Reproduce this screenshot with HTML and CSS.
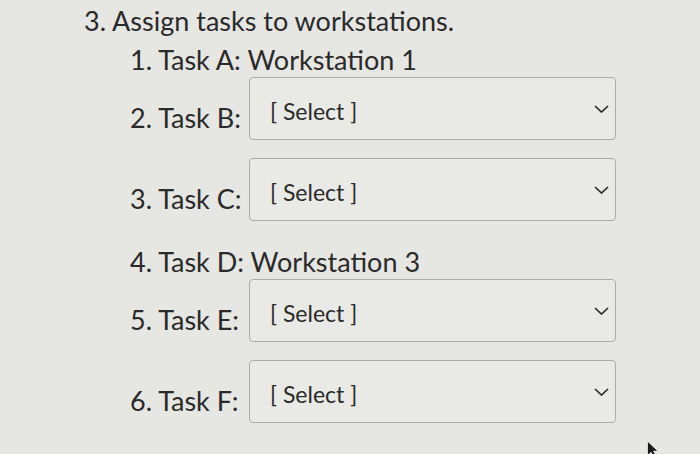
FILE: index.html
```html
<!DOCTYPE html>
<html>
<head>
<meta charset="utf-8">
<link rel="stylesheet" href="styles.css">
</head>
<body>
<div class="page">
  <div class="heading">3. Assign tasks to workstations.</div>
  <div class="list">
    <div class="item plain plain-first">1. Task A: Workstation 1</div>
    <div class="item row">
      <span class="label">2. Task B:</span>
      <div class="select"><span class="sel-text">[ Select ]</span><svg class="chev" viewBox="0 0 15 8"><path d="M1 1 L7.5 7 L14 1"/></svg></div>
    </div>
    <div class="item row">
      <span class="label">3. Task C:</span>
      <div class="select"><span class="sel-text">[ Select ]</span><svg class="chev" viewBox="0 0 15 8"><path d="M1 1 L7.5 7 L14 1"/></svg></div>
    </div>
    <div class="item plain">4. Task D: Workstation 3</div>
    <div class="item row">
      <span class="label">5. Task E:</span>
      <div class="select"><span class="sel-text">[ Select ]</span><svg class="chev" viewBox="0 0 15 8"><path d="M1 1 L7.5 7 L14 1"/></svg></div>
    </div>
    <div class="item row">
      <span class="label">6. Task F:</span>
      <div class="select"><span class="sel-text">[ Select ]</span><svg class="chev" viewBox="0 0 15 8"><path d="M1 1 L7.5 7 L14 1"/></svg></div>
    </div>
  </div>
</div>
<svg class="cursor" viewBox="0 0 12 16"><path d="M1 1 L1 15 L4.5 11.5 L7 16 L9 15 L6.5 10.5 L11 10.5 Z"/></svg>
</body>
</html>
```
FILE: styles.css
```css
html, body {
  margin: 0;
  padding: 0;
  background: #e6e6e3;
}
body {
  position: relative;
  width: 700px;
  height: 454px;
  overflow: hidden;
  font-family: Lato, "Open Sans", sans-serif;
  color: #2a2a2a;
}
.page {
  padding: 4px 0 0 84px;
}
.heading {
  font-size: 27px;
  line-height: 33px;
}
.list {
  padding-left: 46px;
  display: flex;
  flex-direction: column;
}
.plain {
  font-size: 27px;
  line-height: 32px;
}
.plain-first {
  margin-top: 7px;
}
.row {
  display: flex;
  align-items: center;
  margin-top: 18px;
}
.plain + .row {
  margin-top: 1px;
}
.row + .plain {
  margin-top: 25px;
}
.label {
  font-size: 27px;
  width: 119px;
  padding-top: 17px;
  white-space: nowrap;
}
.select {
  box-sizing: border-box;
  width: 367px;
  height: 63px;
  border: 1px solid #ababab;
  border-radius: 4px;
  background: #e9e9e6;
  display: flex;
  align-items: center;
  padding: 0 6px 0 20px;
}
.sel-text {
  font-size: 23px;
  flex: 1;
  margin-top: 5px;
}
.chev {
  width: 15px;
  height: 8px;
  fill: none;
  stroke: #2a2a2a;
  stroke-width: 1.7;
}
.cursor {
  position: absolute;
  left: 647px;
  top: 441px;
  width: 11px;
  height: 15px;
  fill: #1a1a1a;
}
```
